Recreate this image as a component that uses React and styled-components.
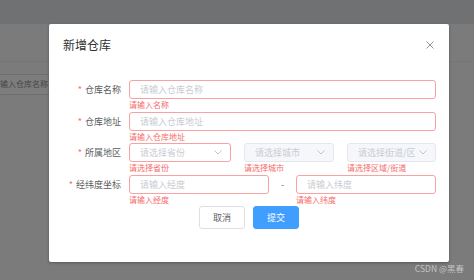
import React from "react";
import styled, { createGlobalStyle } from "styled-components";

const Global = createGlobalStyle`
  html, body { margin: 0; padding: 0; }
  body {
    width: 474px; height: 280px; overflow: hidden;
    font-family: "Noto Sans CJK SC", "Noto Sans", sans-serif;
  }
  * { box-sizing: border-box; }
`;

const Screen = styled.div`
  position: relative;
  width: 474px;
  height: 280px;
  overflow: hidden;
  background: #f7f7f7;
`;

const TopBar = styled.div`
  height: 24px;
  background: #dfe2e6;
`;

const Toolbar = styled.div`
  margin-top: 37px;
  border-top: 1px solid #ebebeb;
  padding-top: 12px;
  height: 60px;
`;

const SearchBox = styled.div`
  width: 50px;
  height: 21px;
  border: 1px solid #dcdfe6;
  border-left: none;
  background: #fafafa;
  display: flex;
  align-items: center;
  white-space: nowrap;
  font-size: 8px;
  line-height: 15px;
  padding-bottom: 3px;
  color: #8d8f94;
`;

const Mask = styled.div`
  position: absolute;
  inset: 0;
  background: rgba(0, 0, 0, 0.5);
  padding: 24px 0 0 49px;
`;

const Dialog = styled.div`
  width: 400px;
  height: 238px;
  background: #fff;
  border-radius: 2px;
  box-shadow: 0 1px 3px rgba(0, 0, 0, 0.3);
`;

const Header = styled.div`
  display: flex;
  justify-content: space-between;
  align-items: center;
  height: 40px;
  padding: 13px 15px 11px 14px;
`;

const Title = styled.span`
  font-size: 12px;
  line-height: 16px;
  color: #303133;
`;

const Close = styled.svg`
  width: 8px;
  height: 8px;
  stroke: #909399;
  stroke-width: 1;
`;

const Body = styled.div`
  padding-top: 16px;
`;

const FormItem = styled.div`
  display: grid;
  grid-template-columns: 80px 1fr;
  padding-right: 13px;
  margin-bottom: 1.5px;
`;

const Label = styled.div`
  height: 19px;
  line-height: 19px;
  text-align: right;
  padding-right: 8px;
  font-size: 9px;
  color: #5a5c61;
  white-space: nowrap;
`;

const Star = styled.span`
  color: #f56c6c;
  margin-right: 3px;
`;

const Control = styled.div`
  display: flex;
  flex-direction: column;
`;

const Input = styled.input`
  width: 100%;
  height: 19px;
  border: 1px solid #f7a3a3;
  border-radius: 3px;
  padding: 0 10px;
  font-family: inherit;
  font-size: 9px;
  color: #606266;
  background: #fff;
  outline: none;
  &::placeholder { color: #c9ccd2; }
`;

const Error = styled.div`
  height: 11px;
  line-height: 11px;
  font-size: 8px;
  color: #f56c6c;
  white-space: nowrap;
`;

const SelectRow = styled.div`
  display: grid;
  grid-template-columns: 102px 90px 89px;
  column-gap: 13px;
`;

const Select = styled.div`
  height: 19px;
  border: 1px solid ${(p) => (p.$disabled ? "#e4e7ed" : "#f7a3a3")};
  background: ${(p) => (p.$disabled ? "#f5f7fa" : "#fff")};
  border-radius: 3px;
  display: flex;
  align-items: center;
  justify-content: space-between;
  padding: 0 8px 0 10px;
  font-size: 9px;
  color: #c9ccd2;
  white-space: nowrap;
  overflow: hidden;
`;

const Chevron = styled.svg`
  width: 8px;
  height: 5px;
  flex: none;
  fill: none;
  stroke: #c0c4cc;
  stroke-width: 1;
`;

const CoordRow = styled.div`
  display: grid;
  grid-template-columns: 140px 1fr 140px;
`;

const Dash = styled.div`
  height: 19px;
  line-height: 19px;
  text-align: center;
  font-size: 9px;
  color: #606266;
`;

const Footer = styled.div`
  display: flex;
  justify-content: center;
  gap: 8px;
  margin-top: 1px;
`;

const Button = styled.button`
  width: 46px;
  height: 23px;
  border-radius: 3px;
  font-family: inherit;
  font-size: 9px;
  padding: 0;
  border: 1px solid ${(p) => (p.$primary ? "#409eff" : "#dcdfe6")};
  background: ${(p) => (p.$primary ? "#409eff" : "#fff")};
  color: ${(p) => (p.$primary ? "#fff" : "#606266")};
`;

const Watermark = styled.div`
  position: absolute;
  right: 10px;
  bottom: 6px;
  font-size: 8.5px;
  color: rgba(255, 255, 255, 0.55);
  font-family: "Noto Sans CJK SC", sans-serif;
`;

const ChevronIcon = () => (
  <Chevron viewBox="0 0 8 5">
    <polyline points="0.5,0.5 4,4 7.5,0.5" />
  </Chevron>
);

export default function App() {
  return (
    <Screen>
      <Global />
      <TopBar />
      <Toolbar>
        <SearchBox>输入仓库名称</SearchBox>
      </Toolbar>
      <Mask>
        <Dialog>
          <Header>
            <Title>新增仓库</Title>
            <Close viewBox="0 0 8 8">
              <line x1="0.5" y1="0.5" x2="7.5" y2="7.5" />
              <line x1="7.5" y1="0.5" x2="0.5" y2="7.5" />
            </Close>
          </Header>
          <Body>
            <FormItem>
              <Label><Star>*</Star>仓库名称</Label>
              <Control>
                <Input readOnly placeholder="请输入仓库名称" />
                <Error>请输入名称</Error>
              </Control>
            </FormItem>
            <FormItem>
              <Label><Star>*</Star>仓库地址</Label>
              <Control>
                <Input readOnly placeholder="请输入仓库地址" />
                <Error>请输入仓库地址</Error>
              </Control>
            </FormItem>
            <FormItem>
              <Label><Star>*</Star>所属地区</Label>
              <SelectRow>
                <Control>
                  <Select>请选择省份<ChevronIcon /></Select>
                  <Error>请选择省份</Error>
                </Control>
                <Control>
                  <Select $disabled>请选择城市<ChevronIcon /></Select>
                  <Error>请选择城市</Error>
                </Control>
                <Control>
                  <Select $disabled>请选择街道/区<ChevronIcon /></Select>
                  <Error>请选择区域/街道</Error>
                </Control>
              </SelectRow>
            </FormItem>
            <FormItem>
              <Label><Star>*</Star>经纬度坐标</Label>
              <CoordRow>
                <Control>
                  <Input readOnly placeholder="请输入经度" />
                  <Error>请输入经度</Error>
                </Control>
                <Dash>-</Dash>
                <Control>
                  <Input readOnly placeholder="请输入纬度" />
                  <Error>请输入纬度</Error>
                </Control>
              </CoordRow>
            </FormItem>
            <Footer>
              <Button>取消</Button>
              <Button $primary>提交</Button>
            </Footer>
          </Body>
        </Dialog>
      </Mask>
      <Watermark>CSDN @黑春</Watermark>
    </Screen>
  );
}
